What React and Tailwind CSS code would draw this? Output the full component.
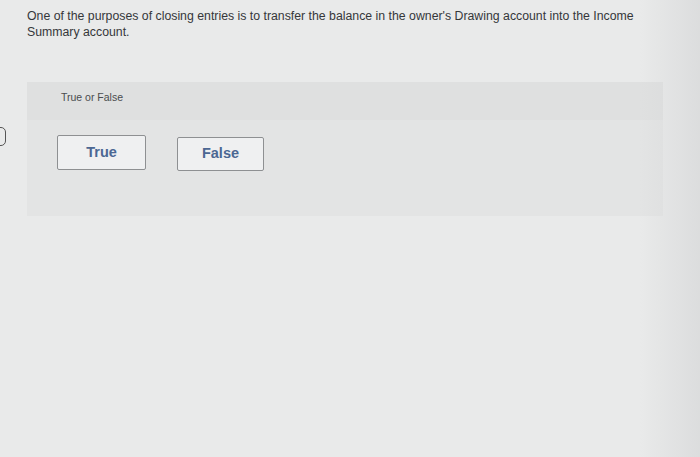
export default function App() {
  return (
    <div
      className="relative w-[700px] h-[457px] overflow-hidden bg-[#e9eaea] text-[#2f3133]"
      style={{ fontFamily: '"Liberation Sans", Arial, sans-serif' }}
    >
      {/* edge of a control cut off at the left */}
      <div className="absolute left-[-14px] top-[127px] w-[20px] h-[19px] rounded-[5px] border border-[#555]" />

      <div className="pl-[27px] pr-[60px] pt-[8px] text-[12.3px] leading-[16px] text-[#35373a]">
        One of the purposes of closing entries is to transfer the balance in the owner's Drawing account into the Income
        Summary account.
      </div>

      <div className="ml-[27px] mt-[42px] w-[636px] bg-[#e3e4e4]">
        <div className="h-[38px] pl-[34px] pt-[8px] text-[10.5px] text-[#4a4c4e] bg-[#dfe0e0]">True or False</div>
        <div className="h-[96px] flex items-start gap-[31px] pl-[30px] pt-[15px]">
          <button className="w-[89px] h-[35px] border border-[#8e9092] rounded-[2px] bg-[#eff0f1] text-[14.5px] font-bold text-[#4b6793]">
            True
          </button>
          <button className="mt-[2px] w-[87px] h-[34px] border border-[#8e9092] rounded-[2px] bg-[#eff0f1] text-[14.5px] font-bold text-[#4b6793]">
            False
          </button>
        </div>
      </div>

      <div className="absolute right-0 top-0 h-full w-[60px] bg-gradient-to-r from-transparent to-[#d6d7d8]/70 pointer-events-none" />
    </div>
  )
}
